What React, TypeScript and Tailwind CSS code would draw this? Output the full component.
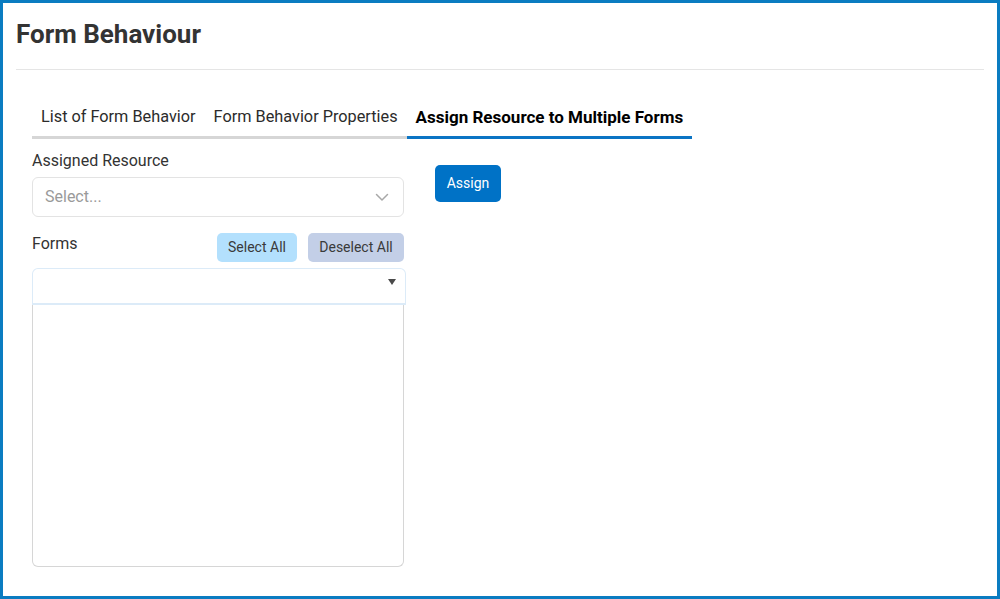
import React from "react";

const tabs = [
  { label: "List of Form Behavior", active: false },
  { label: "Form Behavior Properties", active: false },
  { label: "Assign Resource to Multiple Forms", active: true },
];

const App: React.FC = () => {
  return (
    <div
      className="w-[1000px] h-[599px] border-[3px] border-[#0a7cc1] bg-white overflow-hidden text-[#212529]"
      style={{ fontFamily: "Roboto, 'Liberation Sans', sans-serif" }}
    >
      <div className="px-[13px] pt-[15px]">
        <h1 className="text-[26px] leading-[32px] font-bold text-[#333333] pb-[19px] border-b border-[#e5e5e5]">
          Form Behaviour
        </h1>

        <div className="px-4 pt-[35px]">
          <div className="flex">
            {tabs.map((t) => (
              <div
                key={t.label}
                className={
                  t.active
                    ? "pl-[9px] pr-[9px] pb-[7px] text-[17px] leading-[24px] font-bold text-black border-b-[3px] border-[#0b74c4]"
                    : "px-[9px] pb-[7px] text-[16.3px] leading-[24px] text-[#2b2b2b] border-b-[3px] border-[#d6d6d6]"
                }
              >
                {t.label}
              </div>
            ))}
          </div>

          <div className="flex gap-[31px] pt-[10px]">
            <div className="w-[372px] flex flex-col">
              <label className="text-[16px] leading-[24px] text-[#333333]">Assigned Resource</label>
              <div className="mt-[4px] h-[40px] rounded-[6px] border border-[#e3e3e3] flex items-center justify-between pl-[12px] pr-[13px]">
                <span className="text-[16px] text-[#9a9a9a]">Select...</span>
                <svg width="16" height="16" viewBox="0 0 16 16" fill="none">
                  <path d="M2.5 5.5 8 11l5.5-5.5" stroke="#a8a8a8" strokeWidth="1.5" strokeLinecap="round" strokeLinejoin="round" />
                </svg>
              </div>

              <div className="mt-[16px] flex items-center justify-between">
                <span className="text-[16px] leading-[24px] text-[#333333] -mt-[8px]">Forms</span>
                <div className="flex gap-[11px]">
                  <button className="h-[29px] w-[80px] rounded-[5px] bg-[#b3e0fd] text-[14px] text-[#3a3a3a]">
                    Select All
                  </button>
                  <button className="h-[29px] w-[96px] rounded-[5px] bg-[#c3cfe7] text-[14px] text-[#3a3a3a]">
                    Deselect All
                  </button>
                </div>
              </div>

              <div className="mt-[6px] w-[374px] h-[37px] rounded-t-[6px] border border-b-2 border-[#dcebf8] flex items-center justify-end pr-[8px]">
                <svg width="10" height="8" viewBox="0 0 10 8" className="-mt-[9px]">
                  <path d="M1 1h8L5 7z" fill="#4a4a4a" />
                </svg>
              </div>
              <div className="h-[262px] rounded-b-[6px] border border-t-0 border-[#d6d6d6]" />
            </div>

            <div className="pt-[16px]">
              <button className="h-[37px] w-[66px] rounded-[5px] bg-[#0072c6] text-white text-[14px]">
                Assign
              </button>
            </div>
          </div>
        </div>
      </div>
    </div>
  );
};

export default App;
